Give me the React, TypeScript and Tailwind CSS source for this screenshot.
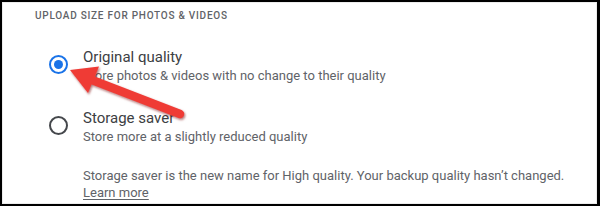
const Radio = ({ checked }: { checked?: boolean }) => {
    return (
        <span
            className={
                checked
                    ? "mt-2 flex h-[19px] w-[19px] shrink-0 items-center justify-center rounded-full border-[2px] border-[#1a73e8]"
                    : "mt-2 flex h-[19px] w-[19px] shrink-0 items-center justify-center rounded-full border-[2px] border-[#45484c]"
            }
        >
            {checked && <span className="h-[9px] w-[9px] rounded-full bg-[#1a73e8]" />}
        </span>
    )
}

const Option = ({
    title,
    desc,
    checked,
}: {
    title: string
    desc: string
    checked?: boolean
}) => {
    return (
        <div className="flex gap-[15px]">
            <Radio checked={checked} />
            <div className="flex flex-col">
                <span className="text-[15px] leading-[20px] text-[#3c4043]">{title}</span>
                <span className="text-[13px] leading-[17px] text-[#5f6368]">{desc}</span>
            </div>
        </div>
    )
}

export default function App() {
    return (
        <div
            className="relative h-[206px] w-[600px] bg-black pb-[2px] pl-[2px] pr-[3px] pt-[2px]"
            style={{ fontFamily: "Roboto, 'Liberation Sans', sans-serif" }}
        >
            <div className="flex h-full flex-col border border-[#ececec] bg-white">
                <h2 className="ml-[32px] mt-[6px] text-[10px] font-medium uppercase leading-[14px] tracking-[0.075em] text-[#5f6368]">
                    Upload size for photos &amp; videos
                </h2>
                <div className="ml-[46px] mt-[24px] flex flex-col gap-[24px]">
                    <Option
                        checked
                        title="Original quality"
                        desc="Store photos & videos with no change to their quality"
                    />
                    <Option
                        title="Storage saver"
                        desc="Store more at a slightly reduced quality"
                    />
                </div>
                <div className="ml-[80px] mt-[22px] flex flex-col text-[13px] leading-[17px] text-[#5f6368]">
                    <p className="whitespace-nowrap">
                        Storage saver is the new name for High quality. Your backup quality hasn’t changed.
                    </p>
                    <a className="w-fit underline underline-offset-2">Learn more</a>
                </div>
            </div>

            {/* red callout arrow drawn over the screenshot */}
            <svg
                className="pointer-events-none absolute left-0 top-0"
                width="600"
                height="206"
                viewBox="0 0 600 206"
            >
                <defs>
                    <filter id="shadow" x="-20%" y="-20%" width="140%" height="140%">
                        <feDropShadow dx="1" dy="1.5" stdDeviation="1.2" floodColor="#7a1010" floodOpacity="0.6" />
                    </filter>
                </defs>
                <g filter="url(#shadow)" fill="#ef3b36">
                    <polygon points="70,70 99,66.5 88,93" />
                    <line
                        x1="92"
                        y1="80"
                        x2="180"
                        y2="114"
                        stroke="#ef3b36"
                        strokeWidth="8.5"
                        strokeLinecap="round"
                    />
                </g>
            </svg>
        </div>
    )
}
